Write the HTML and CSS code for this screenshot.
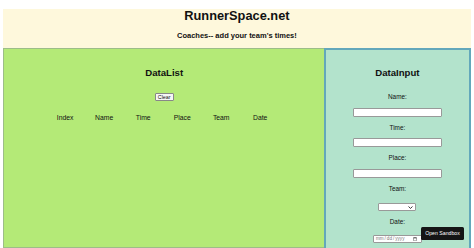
FILE: index.html
```html
<!DOCTYPE html>
<html lang="en">
<head>
    <meta charset="UTF-8">
    <title>RunnerSpace</title>
    <link rel="stylesheet" href="styles.css">
</head>
<body>
    <div class="header">
        <h1 class="header__title">RunnerSpace.net</h1>
        <h3 class="header__sub">Coaches-- add your team's times!</h3>
    </div>
    <div class="main">
        <div class="datalist">
            <h2 class="panel-title">DataList</h2>
            <button class="clear-btn">Clear</button>
            <table class="runs">
                <thead>
                    <tr>
                        <th>Index</th>
                        <th>Name</th>
                        <th>Time</th>
                        <th>Place</th>
                        <th>Team</th>
                        <th>Date</th>
                    </tr>
                </thead>
                <tbody></tbody>
            </table>
        </div>
        <div class="datainput">
            <h2 class="panel-title">DataInput</h2>
            <label class="field-label">Name:</label>
            <input class="field" type="text">
            <label class="field-label">Time:</label>
            <input class="field" type="text">
            <label class="field-label">Place:</label>
            <input class="field" type="text">
            <label class="field-label">Team:</label>
            <span class="team-wrap">
                <select class="team-select"></select>
                <svg class="team-arrow" width="5" height="3" viewBox="0 0 5 3"><path d="M0.5 0.5 L2.5 2.4 L4.5 0.5" fill="none" stroke="#222" stroke-width="0.9"/></svg>
            </span>
            <label class="field-label field-label--date">Date:</label>
            <input class="date-field" type="date">
        </div>
    </div>
    <div class="sandbox-btn">Open Sandbox</div>
</body>
</html>
```

FILE: styles.css
```css
html, body {
    height: 100%;
}
body {
    margin: 0;
    padding: 8.6px 3.4px 0 3.2px;
    box-sizing: border-box;
    font-family: "Liberation Sans", Arial, sans-serif;
    font-size: 6.4px;
    color: #111;
    background: #fff;
    display: flex;
    flex-direction: column;
    overflow: hidden;
}

.header {
    background: #fef8dc;
    text-align: center;
    padding-bottom: 7.5px;
}
.header__title {
    margin: 0 0 8.6px;
    font-size: 12.8px;
    line-height: 14.7px;
}
.header__sub {
    margin: 0;
    font-size: 7.5px;
    line-height: 8.6px;
}

.main {
    flex: 1;
    display: flex;
}

.panel-title {
    margin: 0;
    font-size: 9.6px;
    line-height: 11px;
}

.datalist {
    width: 321px;
    box-sizing: border-box;
    background: #b4ea77;
    border: 1px solid #9dbd88;
    border-right: 0;
    padding-top: 18.5px;
    display: flex;
    flex-direction: column;
    align-items: center;
}
.clear-btn {
    margin-top: 14.2px;
    font-family: "Liberation Sans", Arial, sans-serif;
    font-size: 5.3px;
    height: 8.5px;
    line-height: 6px;
    padding: 0 2px;
    background: #f6f6f6;
    border: 0.5px solid #888;
    border-radius: 1px;
    color: #111;
}
.runs {
    margin-top: 12px;
    margin-right: 3px;
    border-collapse: collapse;
}
.runs th {
    width: 39px;
    padding: 1px 0;
    font-size: 6.8px;
    font-weight: normal;
    line-height: 7.4px;
    text-align: center;
}

.datainput {
    flex: 1;
    background: #b3e3cc;
    border: 2px solid #63a8bb;
    border-bottom: 0;
    padding-top: 17.5px;
    display: flex;
    flex-direction: column;
    align-items: center;
}
.field-label {
    line-height: 7.4px;
    margin-top: 7px;
}
.datainput .panel-title + .field-label {
    margin-top: 14.8px;
}
.field {
    margin-top: 7px;
    width: 89px;
    height: 9px;
    box-sizing: border-box;
    border: 0.5px solid #999;
    border-radius: 1px;
    background: #fff;
    padding: 0;
}
.team-wrap {
    position: relative;
    margin-top: 11px;
    display: block;
    width: 38px;
    height: 8px;
}
.team-select {
    display: block;
    width: 38px;
    height: 8px;
    box-sizing: border-box;
    -webkit-appearance: none;
    appearance: none;
    padding: 0;
    border: 0.5px solid #999;
    border-radius: 1px;
    background: #fff;
}
.team-arrow {
    position: absolute;
    right: 3px;
    top: 2.6px;
}
.field-label--date {
    margin-top: 7.3px;
}
.date-field {
    margin-top: 9.3px;
    width: 49px;
    height: 8px;
    box-sizing: border-box;
    font-family: "Liberation Sans", Arial, sans-serif;
    font-size: 4.6px;
    padding: 0 1px;
    border: 0.5px solid #999;
    border-radius: 1px;
    background: #fff;
    color: #777;
}

.sandbox-btn {
    position: fixed;
    left: 421px;
    top: 227px;
    width: 43px;
    height: 13px;
    background: #151515;
    color: #fff;
    font-size: 5.2px;
    line-height: 13px;
    text-align: center;
    border-radius: 1.5px;
}
```
